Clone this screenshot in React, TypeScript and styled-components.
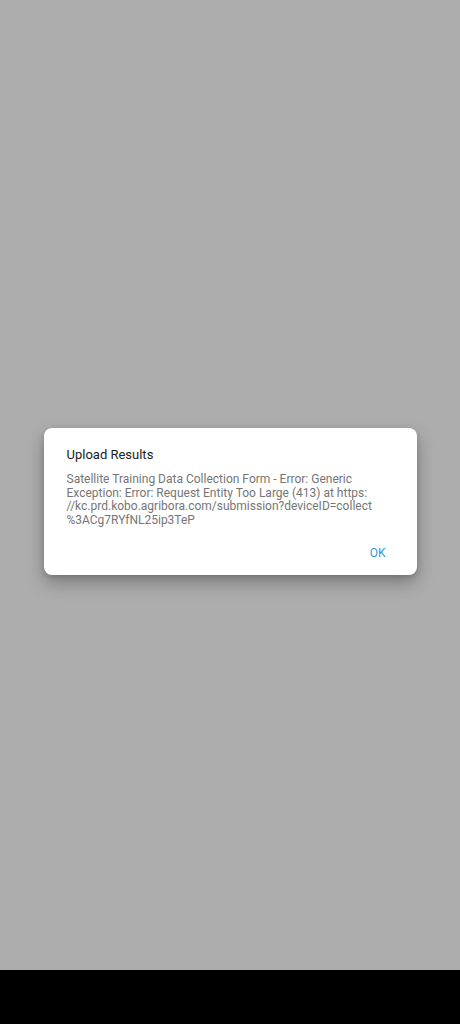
import React from 'react'
import styled, { createGlobalStyle } from 'styled-components'

const GlobalStyle = createGlobalStyle`
  html, body {
    margin: 0;
    padding: 0;
    background: #000;
  }
  body {
    font-family: Roboto, 'Noto Sans', sans-serif;
  }
`

const Screen = styled.div`
  width: 460px;
  height: 1024px;
  display: flex;
  flex-direction: column;
`

const Scrim = styled.div`
  flex: 1;
  background: #adadad;
  display: flex;
  justify-content: center;
  align-items: flex-start;
  padding-top: 428px;
  box-sizing: border-box;
`

const NavBar = styled.div`
  height: 54px;
  background: #000;
`

const Dialog = styled.div`
  width: 373px;
  box-sizing: border-box;
  background: #fff;
  border-radius: 8px;
  box-shadow: 0 8px 18px rgba(0, 0, 0, 0.28), 0 2px 5px rgba(0, 0, 0, 0.15);
  padding: 18px 23px 14px 23px;
  display: flex;
  flex-direction: column;
`

const Title = styled.h2`
  margin: 0;
  font-size: 13px;
  font-weight: 400;
  color: #202020;
  line-height: 18px;
`

const Message = styled.p`
  margin: 9px 0 0;
  font-size: 12px;
  line-height: 13.5px;
  color: #767676;
  white-space: pre-line;
`

const Actions = styled.div`
  display: flex;
  justify-content: flex-end;
  margin-top: 18px;
`

const TextButton = styled.button`
  background: none;
  border: none;
  padding: 0 8px;
  font-family: inherit;
  font-size: 12px;
  line-height: 16px;
  color: #2a9bd8;
  cursor: pointer;
`

const message = [
  'Satellite Training Data Collection Form - Error: Generic',
  'Exception: Error: Request Entity Too Large (413) at https:',
  '//kc.prd.kobo.agribora.com/submission?deviceID=collect',
  '%3ACg7RYfNL25ip3TeP',
].join('\n')

const App: React.FC = () => (
  <Screen>
    <GlobalStyle />
    <Scrim>
      <Dialog>
        <Title>Upload Results</Title>
        <Message>{message}</Message>
        <Actions>
          <TextButton>OK</TextButton>
        </Actions>
      </Dialog>
    </Scrim>
    <NavBar />
  </Screen>
)

export default App
